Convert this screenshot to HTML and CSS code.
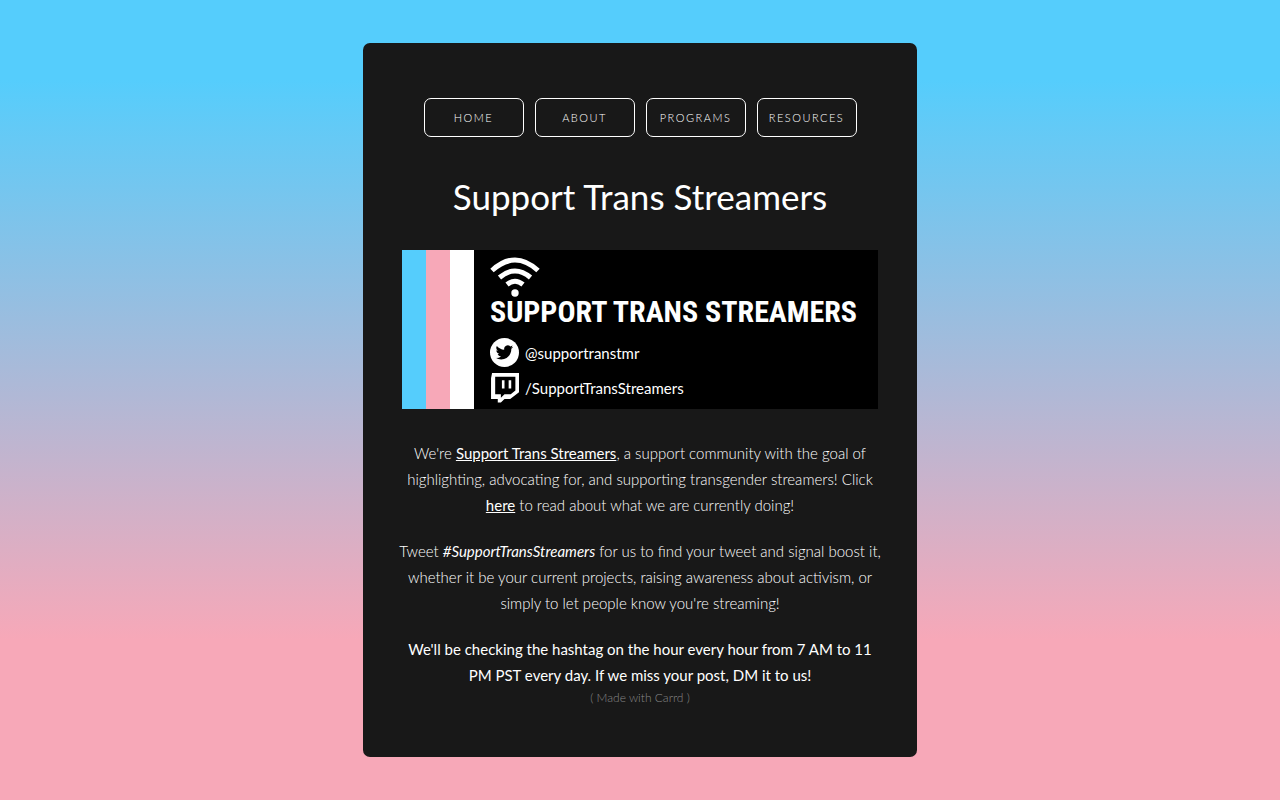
FILE: index.html
```
<!DOCTYPE html>
<html lang="en">
<head>
    <meta charset="utf-8">
    <meta name="viewport" content="width=device-width, initial-scale=1">
    <title>Support Trans Streamers</title>
    <link rel="stylesheet" href="styles.css">
</head>
<body>
    <main class="card">
        <nav class="buttons">
            <a href="#home">Home</a>
            <a href="#about">About</a>
            <a href="#programs">Programs</a>
            <a href="#resources">Resources</a>
        </nav>
        <h1>Support Trans Streamers</h1>
        <div class="banner">
            <div class="stripe blue"></div>
            <div class="stripe pink"></div>
            <div class="stripe white"></div>
            <div class="banner-content">
                <svg class="wifi" viewBox="0 0 50 40" fill="none" stroke="#fff" stroke-width="5">
                    <path d="M2 13.500Q25 -7.500 48 13.500"/>
                    <path d="M9.500 20.500Q25 7.500 40.500 20.500"/>
                    <path d="M17 27.500Q25 21 33 27.500"/>
                    <circle cx="25" cy="36" r="3.700" fill="#fff" stroke="none"/>
                </svg>
                <div class="banner-title">SUPPORT TRANS STREAMERS</div>
                <div class="social">
                    <svg viewBox="0 0 28 28">
                        <circle cx="14" cy="14" r="14" fill="#fff"/>
                        <path transform="translate(5.500 5.500) scale(.7)" fill="#000" d="M23.950 4.570a10 10 0 0 1-2.820.77 4.960 4.960 0 0 0 2.160-2.720c-.95.550-2 .95-3.130 1.180a4.920 4.920 0 0 0-8.380 4.480C7.690 8.090 4.070 6.130 1.640 3.160a4.920 4.920 0 0 0 1.520 6.570 4.900 4.900 0 0 1-2.230-.61v.06a4.920 4.920 0 0 0 3.950 4.830 5 5 0 0 1-2.210.08 4.940 4.940 0 0 0 4.600 3.420A9.870 9.870 0 0 1 0 19.540a13.990 13.990 0 0 0 7.550 2.210c9.050 0 14-7.500 14-13.980 0-.21 0-.42-.02-.63a9.940 9.940 0 0 0 2.420-2.570z"/>
                    </svg>
                    <span>@supportranstmr</span>
                </div>
                <div class="social">
                    <svg viewBox="0 0 28 28">
                        <path fill="#fff" fill-rule="evenodd" d="M2 0H28V18.500L19.500 25H14L10.500 28.500H7.500V25H1V5zM5 3.500V20.500H10.500V24L14 20.500H20L24.500 17V3.500zM11.500 7H14V15H11.500zM18 7H20.500V15H18z"/>
                    </svg>
                    <span>/SupportTransStreamers</span>
                </div>
            </div>
        </div>
        <p>We're <a href="#about">Support Trans Streamers</a>, a support community with the goal of highlighting, advocating for, and supporting transgender streamers! Click <a href="#programs">here</a> to read about what we are currently doing!</p>
        <p>Tweet <em>#SupportTransStreamers</em> for us to find your tweet and signal boost it, whether it be your current projects, raising awareness about activism, or simply to let people know you're streaming!</p>
        <p><strong>We'll be checking the hashtag on the hour every hour from 7 AM to 11 PM PST every day. If we miss your post, DM it to us!</strong></p>
        <footer><a href="#carrd">( Made with Carrd )</a></footer>
    </main>
</body>
</html>
```

FILE: styles.css
```
* {
    box-sizing: border-box;
}
body {
    margin: 0;
    min-height: 100vh;
    padding: 40px 20px;
    display: flex;
    align-items: center;
    justify-content: center;
    font-family: Lato, sans-serif;
    font-size: 15px;
    font-weight: 300;
    line-height: 26px;
    color: #fff;
    text-align: center;
    background: linear-gradient(#55cdfc 10%, #f7a8b8 80%);
}
.card {
    width: 100%;
    max-width: 554px;
    padding: 55px 39px 49px;
    border-radius: 7px;
    background: #181818;
}
.buttons {
    display: flex;
    flex-wrap: wrap;
    justify-content: center;
    gap: 11px;
}
.buttons a {
    width: 100px;
    border: 1px solid #fff;
    border-radius: 7px;
    color: #fff;
    font-size: 11px;
    line-height: 37px;
    letter-spacing: 1.500px;
    text-transform: uppercase;
    text-decoration: none;
}
h1 {
    margin: 33px 0 28px;
    font-size: 35px;
    font-weight: 400;
    line-height: 52px;
}
.banner {
    display: flex;
    margin-bottom: 31px;
    background: #000;
}
.stripe {
    width: 24px;
}
.blue {
    background: #55cdfc;
}
.pink {
    background: #f7a8b8;
}
.white {
    background: #fff;
}
.banner-content {
    padding: 7px 16px 4px;
    text-align: left;
    font-weight: 400;
}
.wifi {
    display: block;
    width: 50px;
    height: 40px;
}
.banner-title {
    margin-bottom: 8px;
    font-family: "Roboto Condensed", "Liberation Sans Narrow", Roboto, sans-serif;
    font-size: 30px;
    font-weight: 700;
    line-height: 30px;
    white-space: nowrap;
}
.social {
    display: flex;
    align-items: center;
    gap: 6px;
    height: 35px;
}
.social svg {
    width: 29px;
    height: 29px;
    overflow: visible;
}
p {
    margin: 0 -3px 20px;
}
p a {
    color: #fff;
    font-weight: 400;
}
em, strong {
    font-weight: 400;
}
footer {
    margin-top: -20px;
    font-size: 12px;
    line-height: 20px;
}
footer a {
    color: #888;
    text-decoration: none;
}
```
